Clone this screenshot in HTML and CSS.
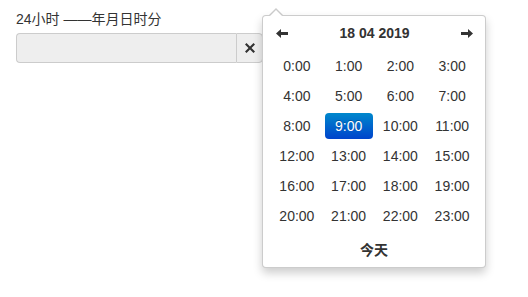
FILE: index.html
```html
<!DOCTYPE html>
<html lang="zh">

<head>
    <meta charset="UTF-8">
    <meta name="viewport" content="width=device-width, initial-scale=1.0">
    <title>datetimepicker</title>
    <link rel="stylesheet" href="styles.css">
</head>

<body>
    <div class="page">
        <label class="field-label">24小时 ——年月日时分</label>
        <div class="input-group">
            <input class="form-control" type="text" readonly>
            <span class="add-on">
                <svg width="10" height="10" viewBox="0 0 10 10">
                    <path d="M1.5 0 L5 3.5 L8.5 0 L10 1.5 L6.5 5 L10 8.5 L8.5 10 L5 6.5 L1.5 10 L0 8.5 L3.5 5 L0 1.5 Z" fill="#333"/>
                </svg>
            </span>
        </div>

        <div class="picker">
            <div class="picker-head">
                <span class="nav prev">
                    <svg width="12" height="9" viewBox="0 0 12 9">
                        <path d="M0 4.5 L5 0 L5 3 L12 3 L12 6 L5 6 L5 9 Z" fill="#333"/>
                    </svg>
                </span>
                <span class="switch">18 04 2019</span>
                <span class="nav next">
                    <svg width="12" height="9" viewBox="0 0 12 9">
                        <path d="M12 4.5 L7 0 L7 3 L0 3 L0 6 L7 6 L7 9 Z" fill="#333"/>
                    </svg>
                </span>
            </div>
            <div class="hours">
                <span class="hour">0:00</span>
                <span class="hour">1:00</span>
                <span class="hour">2:00</span>
                <span class="hour">3:00</span>
                <span class="hour">4:00</span>
                <span class="hour">5:00</span>
                <span class="hour">6:00</span>
                <span class="hour">7:00</span>
                <span class="hour">8:00</span>
                <span class="hour active">9:00</span>
                <span class="hour">10:00</span>
                <span class="hour">11:00</span>
                <span class="hour">12:00</span>
                <span class="hour">13:00</span>
                <span class="hour">14:00</span>
                <span class="hour">15:00</span>
                <span class="hour">16:00</span>
                <span class="hour">17:00</span>
                <span class="hour">18:00</span>
                <span class="hour">19:00</span>
                <span class="hour">20:00</span>
                <span class="hour">21:00</span>
                <span class="hour">22:00</span>
                <span class="hour">23:00</span>
            </div>
            <div class="today">今天</div>
        </div>
    </div>
</body>

</html>
```

FILE: styles.css
```css
body {
    margin: 0;
    font-family: "Liberation Sans", Arial, "Noto Sans CJK SC", sans-serif;
    font-size: 14px;
    line-height: 20px;
    color: #333;
    background: #fff;
}
.page {
    position: relative;
    min-height: 279px;
    padding: 9px 16px;
}
.field-label {
    display: block;
    margin-bottom: 4px;
}
.input-group {
    display: flex;
    width: 247px;
    height: 30px;
}
.form-control {
    flex: 1;
    min-width: 0;
    box-sizing: border-box;
    height: 30px;
    margin: 0;
    padding: 4px 6px;
    border: 1px solid #ccc;
    border-right: none;
    border-radius: 4px 0 0 4px;
    background-color: #eee;
    font: inherit;
}
.add-on {
    display: flex;
    align-items: center;
    justify-content: center;
    box-sizing: border-box;
    width: 27px;
    height: 30px;
    border: 1px solid #ccc;
    border-radius: 0 4px 4px 0;
    background-color: #eee;
}
.picker {
    position: absolute;
    left: 262px;
    top: 15px;
    width: 222px;
    background: #fff;
    border: 1px solid rgba(0, 0, 0, 0.2);
    border-radius: 4px;
    box-shadow: 0 5px 10px rgba(0, 0, 0, 0.2);
}
.picker:before {
    content: "";
    position: absolute;
    top: -8px;
    left: 6px;
    border-left: 7px solid transparent;
    border-right: 7px solid transparent;
    border-bottom: 7px solid rgba(0, 0, 0, 0.2);
}
.picker:after {
    content: "";
    position: absolute;
    top: -6px;
    left: 7px;
    border-left: 6px solid transparent;
    border-right: 6px solid transparent;
    border-bottom: 6px solid #fff;
}
.picker-head {
    display: flex;
    align-items: center;
    justify-content: space-between;
    height: 34px;
    padding: 0 12px 0 13px;
}
.nav { display: flex; }
.switch { font-weight: bold; }
.hours {
    display: grid;
    grid-template-columns: repeat(4, 1fr);
    padding: 1px 7px 2px 8px;
}
.hour {
    height: 26px;
    line-height: 26px;
    margin: 2px;
    text-align: center;
    border-radius: 4px;
}
.hour.active {
    color: #fff;
    background-image: linear-gradient(to bottom, #08c, #04c);
    text-shadow: 0 -1px 0 rgba(0, 0, 0, 0.25);
}
.today {
    height: 34px;
    line-height: 34px;
    text-align: center;
    font-weight: bold;
}
```
